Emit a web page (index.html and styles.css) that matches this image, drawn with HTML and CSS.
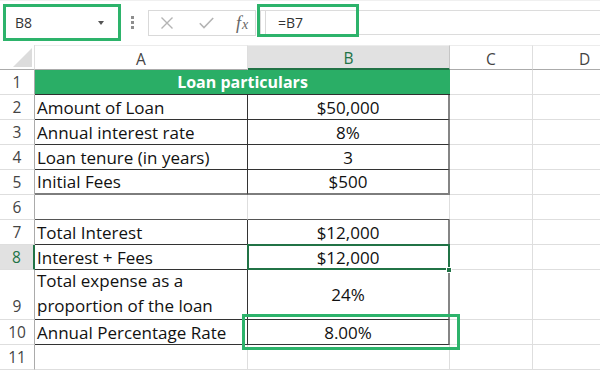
FILE: index.html
```html
<!DOCTYPE html>
<html>
<head>
<meta charset="utf-8">
<link rel="stylesheet" href="styles.css">
</head>
<body>
<div class="app">
  <header class="toolbar">
    <div class="namebox">
      <span class="ref">B8</span>
      <span class="caret"></span>
    </div>
    <div class="grip"><i></i><i></i><i></i></div>
    <div class="fbtns">
      <svg class="ic-x" width="14" height="12" viewBox="0 0 14 12"><path d="M1.5 0.5 L12.5 11.5 M12.5 0.5 L1.5 11.5" stroke="#b4b4b4" stroke-width="1.4" fill="none"/></svg>
      <svg class="ic-ok" width="15" height="12" viewBox="0 0 15 12"><path d="M0.8 6.2 L5 10.5 L14.2 1" stroke="#b4b4b4" stroke-width="1.6" fill="none"/></svg>
      <span class="fx"><i>f</i><i class="x">x</i></span>
    </div>
    <div class="formula">
      <span class="split"></span>
      <span class="ftext">=B7</span>
      <span class="callout-f"></span>
    </div>
  </header>

  <div class="sheet">
    <div class="corner"><span class="tri"></span></div>
    <div class="ch">A</div>
    <div class="ch ch-sel">B</div>
    <div class="ch">C</div>
    <div class="ch">D</div>

    <div class="rh">1</div>
    <div class="title">Loan particulars</div>
    <div class="c"></div>
    <div class="c"></div>

    <div class="rh">2</div>
    <div class="ta">Amount of Loan</div>
    <div class="tb">$50,000</div>
    <div class="c"></div>
    <div class="c"></div>

    <div class="rh">3</div>
    <div class="ta">Annual interest rate</div>
    <div class="tb">8%</div>
    <div class="c"></div>
    <div class="c"></div>

    <div class="rh">4</div>
    <div class="ta">Loan tenure (in years)</div>
    <div class="tb">3</div>
    <div class="c"></div>
    <div class="c"></div>

    <div class="rh">5</div>
    <div class="ta edge-b">Initial Fees</div>
    <div class="tb edge-b">$500</div>
    <div class="c"></div>
    <div class="c"></div>

    <div class="rh">6</div>
    <div class="c dark-b"></div>
    <div class="c dark-b"></div>
    <div class="c"></div>
    <div class="c"></div>

    <div class="rh">7</div>
    <div class="ta">Total Interest</div>
    <div class="tb">$12,000</div>
    <div class="c"></div>
    <div class="c"></div>

    <div class="rh rh-sel">8</div>
    <div class="ta">Interest + Fees</div>
    <div class="tb active">$12,000<span class="handle"></span></div>
    <div class="c"></div>
    <div class="c"></div>

    <div class="rh rh-bottom">9</div>
    <div class="ta wrap">Total expense as a<br>proportion of the loan</div>
    <div class="tb">24%</div>
    <div class="c"></div>
    <div class="c"></div>

    <div class="rh">10</div>
    <div class="ta">Annual Percentage Rate</div>
    <div class="tb">8.00%<span class="callout"></span></div>
    <div class="c"></div>
    <div class="c"></div>

    <div class="rh">11</div>
    <div class="c"></div>
    <div class="c"></div>
    <div class="c"></div>
    <div class="c"></div>
  </div>
</div>
</body>
</html>
```

FILE: styles.css
```css
* { box-sizing: border-box; }
html, body { margin: 0; padding: 0; background: #fff; }
body { width: 600px; height: 372px; overflow: hidden; font-family: "Open Sans", "Liberation Sans", sans-serif; }

.app { width: 600px; overflow: hidden; }

/* ---------- toolbar ---------- */
.toolbar {
  height: 45px;
  display: flex;
  align-items: flex-start;
  background: #fff;
  border-top: 1px solid #f0f0f0;
}
.namebox {
  margin: 3px 0 0 3px;
  width: 118px;
  height: 37px;
  border: 3px solid #2db36b;
  display: flex;
  align-items: center;
  justify-content: space-between;
  padding: 0 14px 0 9px;
  font-size: 14px;
  color: #333;
}
.caret {
  width: 0; height: 0;
  border-left: 3.5px solid transparent;
  border-right: 3.5px solid transparent;
  border-top: 4px solid #555;
}
.grip {
  margin: 15px 0 0 10px;
  width: 3px;
  display: flex;
  flex-direction: column;
  gap: 2.5px;
}
.grip i { display: block; width: 2.5px; height: 2.5px; background: #8e8e8e; }
.fbtns {
  margin: 9px 0 0 14px;
  width: 108px;
  height: 26px;
  border: 1px solid #d9d9d9;
  display: flex;
  align-items: center;
  padding-left: 11px;
}
.ic-ok { margin-left: 25px; }
.fx {
  margin-left: 22px;
  font-family: "Liberation Serif", "DejaVu Serif", serif;
  color: #666;
  font-size: 18px;
  line-height: 1;
}
.fx .x { font-size: 14px; margin-left: 1px; }
.formula {
  position: relative;
  flex: 1;
  margin: 9px 0 0 4px;
  height: 25px;
  border-top: 1px solid #dcdcdc;
  border-bottom: 1px solid #dcdcdc;
  display: flex;
  align-items: center;
}
.split {
  width: 6px; height: 100%;
  border-left: 1px solid #d9d9d9;
  border-right: 1px solid #d9d9d9;
}
.ftext { margin-left: 12px; font-size: 14px; color: #333; }
.callout-f {
  position: absolute;
  left: -3px; top: -7px;
  width: 102px; height: 33px;
  border: 3px solid #2db36b;
}

/* ---------- sheet ---------- */
.sheet {
  display: grid;
  grid-template-columns: 35px 213px 202px 83px 104px;
  grid-template-rows: 25px repeat(8, 25px) 50px 25px 25px;
  font-size: 17px;
  color: #111;
}
.sheet > div {
  display: flex;
  align-items: center;
  white-space: nowrap;
  overflow: visible;
}
.c { border-right: 1px solid #dedede; border-bottom: 1px solid #dedede; }
.corner {
  position: relative;
  border-right: 1px solid #dedede;
  border-bottom: 1px solid #ababab;
}
.tri {
  position: absolute;
  right: 2px; bottom: 2px;
  width: 0; height: 0;
  border-left: 19px solid transparent;
  border-bottom: 19px solid #dcdcdc;
}
.ch {
  justify-content: center;
  font-size: 15.5px;
  color: #444;
  border-right: 1px solid #dedede;
  border-bottom: 1px solid #ababab;
  border-top: 1px solid #ececec;
  padding-top: 2px;
}
.ch-sel {
  background: #e1e1e1;
  color: #217346;
  border-bottom: 2px solid #217346;
  border-right: 1px solid #c6c6c6;
}
.rh {
  justify-content: center;
  font-size: 15.5px;
  color: #444;
  border-right: 1px solid #ababab;
  border-bottom: 1px solid #dedede;
}
.rh-sel {
  background: #e1e1e1;
  color: #217346;
  border-right: 2px solid #217346;
}
.sheet > .rh-bottom { align-items: flex-end; padding-bottom: 2px; }

.title {
  grid-column: span 2;
  justify-content: center;
  background: #2aae66;
  color: #fff;
  font-weight: 700;
  font-size: 16px;
  border-bottom: 1px solid #2f2f2f;
}
.ta {
  padding-left: 2px;
  border-right: 1px solid #333;
  border-bottom: 1px solid #333;
}
.tb {
  justify-content: center;
  position: relative;
  border-right: 2px solid #858585;
  border-bottom: 1px solid #333;
}
.sheet > .edge-b { border-bottom: 2px solid #7d7d7d; }
.dark-b { border-bottom-color: #555; }
.sheet > .wrap {
  white-space: normal;
  align-items: flex-end;
  line-height: 25px;
  padding-bottom: 1px;
}
.active::after {
  content: "";
  position: absolute;
  left: -1px; top: -1px; right: -2px; bottom: -1px;
  border: 2px solid #217346;
}
.handle {
  position: absolute;
  right: -4px; bottom: -4px;
  width: 6px; height: 6px;
  background: #217346;
  border: 1px solid #fff;
  z-index: 2;
}
.callout {
  position: absolute;
  left: -6px; top: -6px;
  width: 218px; height: 36px;
  border: 3.5px solid #2db36b;
  z-index: 3;
}
```
